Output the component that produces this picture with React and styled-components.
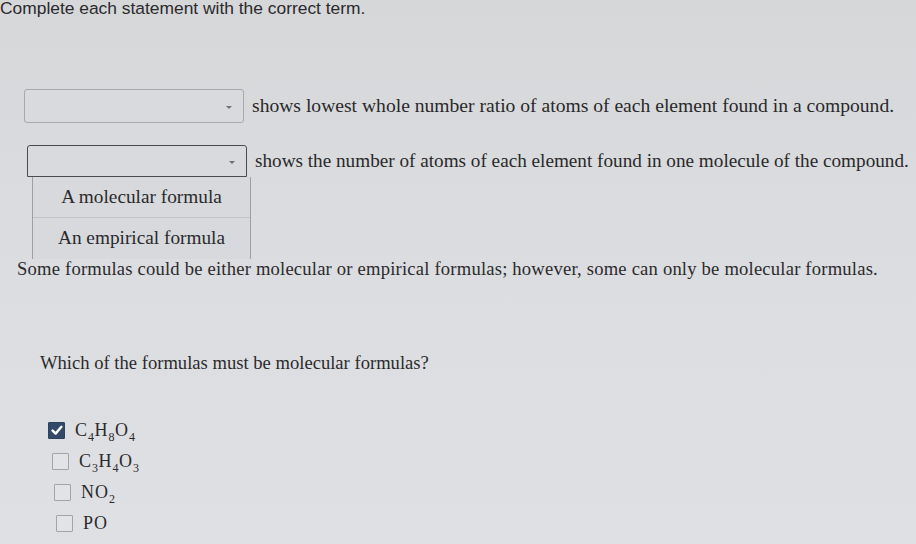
import React from "react";
import styled, { createGlobalStyle } from "styled-components";

const Global = createGlobalStyle`
  html, body { margin: 0; padding: 0; background: #d7d8db; }
  body { width: 916px; height: 544px; overflow: hidden; }
`;

const serif = `"Liberation Serif", "Times New Roman", serif`;

const Page = styled.div`
  width: 916px;
  height: 544px;
  background: linear-gradient(180deg, #d6d7d9 0%, #dcdde0 50%, #dfe0e3 100%);
  color: #2b2b2d;
  font-family: ${serif};
  overflow: hidden;
`;

const Title = styled.div`
  font-family: "Liberation Sans", Arial, sans-serif;
  font-size: 17.4px;
  line-height: 17px;
  margin-left: 0;
  color: #2a2a2c;
  white-space: nowrap;
`;

const Row = styled.div`
  display: flex;
  align-items: center;
  gap: 8px;
  margin-left: ${(p) => p.$x}px;
  margin-top: ${(p) => p.$top}px;
  position: relative;
`;

const Select = styled.div`
  position: relative;
  width: 220px;
  height: ${(p) => (p.$open ? 32 : 34)}px;
  box-sizing: border-box;
  border: 1px solid ${(p) => (p.$open ? "#4a4b4f" : "#a8a9ad")};
  border-radius: ${(p) => (p.$open ? "3px 3px 0 0" : "3px")};
  background: #d9dadd;
  flex: none;
`;

const Caret = styled.span`
  position: absolute;
  right: 11px;
  top: 50%;
  width: 0;
  height: 0;
  border-left: 3px solid transparent;
  border-right: 3px solid transparent;
  border-top: 3px solid #707175;
`;

const Statement = styled.span`
  font-family: ${serif};
  font-size: ${(p) => p.$size}px;
  white-space: nowrap;
  color: #29292b;
`;

const Menu = styled.div`
  position: absolute;
  left: 4px;
  top: 31px;
  width: 219px;
  box-sizing: border-box;
  border-left: 1px solid #9e9fa3;
  border-right: 1px solid #9e9fa3;
  background: #d8d9dc;
  z-index: 2;
`;

const MenuItem = styled.div`
  height: 41px;
  display: flex;
  align-items: center;
  justify-content: center;
  font-family: ${serif};
  font-size: 19.3px;
  color: #2a2a2c;
  border-bottom: 1px solid ${(p) => (p.$last ? "transparent" : "#c2c3c6")};
  box-sizing: border-box;
`;

const Note = styled.div`
  margin-left: 17px;
  margin-top: 81px;
  font-family: ${serif};
  font-size: 18.6px;
  letter-spacing: 0.2px;
  white-space: nowrap;
`;

const Question = styled.div`
  margin-left: 40px;
  margin-top: 72px;
  font-family: ${serif};
  font-size: 18.6px;
  white-space: nowrap;
`;

const Options = styled.div`
  margin-top: 46px;
  display: flex;
  flex-direction: column;
  gap: 11px;
`;

const Option = styled.label`
  display: flex;
  align-items: center;
  gap: 10px;
  height: 20px;
  margin-left: ${(p) => p.$x}px;
  font-family: ${serif};
  font-size: 18px;
  letter-spacing: 1px;
  color: #2b2b2d;
`;

const Box = styled.span`
  width: 17px;
  height: 17px;
  box-sizing: border-box;
  border: 1px solid ${(p) => (p.$checked ? "#2d4160" : "#a3a4a8")};
  background: ${(p) => (p.$checked ? "#33496a" : "#e2e3e6")};
  border-radius: 1px;
  display: flex;
  align-items: center;
  justify-content: center;
  flex: none;
`;

const Sub = styled.sub`
  font-size: 12px;
  vertical-align: -5px;
  line-height: 0;
  letter-spacing: 0.5px;
`;

const Formula = ({ parts }) => (
  <span>
    {parts.map(([el, n], i) => (
      <React.Fragment key={i}>
        {el}
        {n && <Sub>{n}</Sub>}
      </React.Fragment>
    ))}
  </span>
);

const options = [
  { parts: [["C", "4"], ["H", "8"], ["O", "4"]], checked: true, x: 48 },
  { parts: [["C", "3"], ["H", "4"], ["O", "3"]], checked: false, x: 52 },
  { parts: [["N", null], ["O", "2"]], checked: false, x: 54 },
  { parts: [["PO", null]], checked: false, x: 56 },
];

export default function App() {
  return (
    <Page>
      <Global />
      <Title>Complete each statement with the correct term.</Title>
      <Row $x={24} $top={72}>
        <Select>
          <Caret />
        </Select>
        <Statement $size={19.6}>
          shows lowest whole number ratio of atoms of each element found in a compound.
        </Statement>
      </Row>
      <Row $x={27} $top={22}>
        <Select $open>
          <Caret />
          <Menu>
            <MenuItem>A molecular formula</MenuItem>
            <MenuItem $last>An empirical formula</MenuItem>
          </Menu>
        </Select>
        <Statement $size={19.2}>
          shows the number of atoms of each element found in one molecule of the compound.
        </Statement>
      </Row>
      <Note>
        Some formulas could be either molecular or empirical formulas; however, some can only be molecular formulas.
      </Note>
      <Question>Which of the formulas must be molecular formulas?</Question>
      <Options>
        {options.map((o, i) => (
          <Option key={i} $x={o.x}>
            <Box $checked={o.checked}>
              {o.checked && (
                <svg width="12" height="11" viewBox="0 0 12 11">
                  <path d="M1.6 5.6 L4.6 8.6 L10.4 1.8" fill="none" stroke="#fff" strokeWidth="2.4" strokeLinecap="round" strokeLinejoin="round" />
                </svg>
              )}
            </Box>
            <Formula parts={o.parts} />
          </Option>
        ))}
      </Options>
    </Page>
  );
}
